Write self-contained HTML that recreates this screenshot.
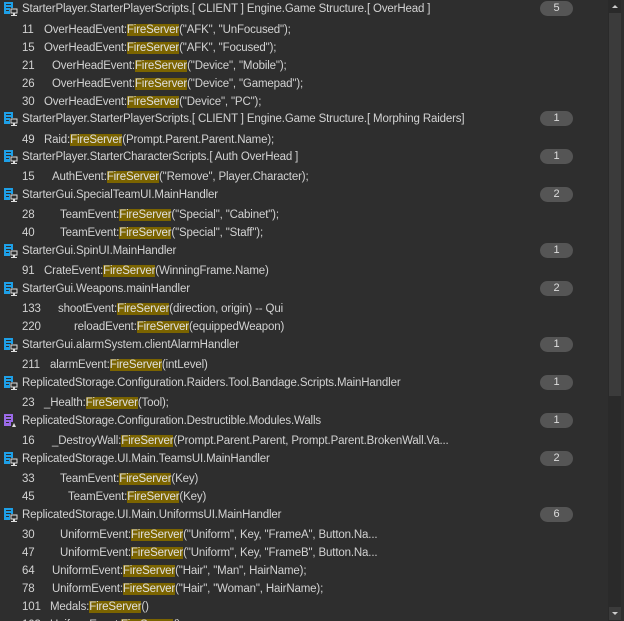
<!DOCTYPE html>
<html><head><meta charset="utf-8"><style>
html,body{margin:0;padding:0;background:#2e2e2e;width:624px;height:621px;overflow:hidden}
body{position:relative;font-family:"Liberation Sans",sans-serif;font-size:11.5px;color:#d2d2d2;letter-spacing:-0.15px}
#w{position:absolute;left:0;top:1px;width:624px;height:640px}
.r{position:absolute;left:0;height:18px;line-height:18px;white-space:nowrap}
.h{left:22px}
.n{position:absolute;left:22px}
.c{position:absolute}
.f{background:#7b6400;color:#e0e0e0}
.b{position:absolute;left:540px;width:33px;height:15px;border-radius:8px;background:#555;color:#ddd;text-align:center;line-height:15px;font-size:11px}
.i{position:absolute;left:3px;width:16px;height:14px}
.sb{position:absolute;left:608px;top:0;width:13px;height:621px;background:#2a2a2a}
.th{position:absolute;left:609px;top:13px;width:12px;height:383px;background:#3b3b3b}
</style></head><body>
<svg width="0" height="0" style="position:absolute"><defs>
<g id="bi"><rect x="1" y="0" width="9" height="12" fill="#1ea0e8"/><rect x="3" y="2" width="5" height="1" fill="#2e2e2e"/><rect x="3" y="5" width="5" height="1" fill="#2e2e2e"/><rect x="3" y="8" width="3" height="1" fill="#2e2e2e"/><rect x="7" y="6" width="8" height="6" fill="#2e2e2e"/><rect x="8" y="7" width="6" height="4" fill="none" stroke="#ddd" stroke-width="1"/><rect x="10" y="11" width="2" height="2" fill="#ddd"/><rect x="8" y="13" width="6" height="1" fill="#ddd"/></g>
<g id="pi"><rect x="1" y="0" width="9" height="12" fill="#9b6ae8"/><rect x="3" y="2" width="5" height="1" fill="#2e2e2e"/><rect x="3" y="5" width="5" height="1" fill="#2e2e2e"/><rect x="3" y="8" width="3" height="1" fill="#2e2e2e"/><rect x="8" y="8" width="6" height="5" fill="#2e2e2e"/><path d="M9 13 L11 9 L13 13 Z" fill="#ddd"/></g>
</defs></svg>
<div class="sb"></div><div class="th"></div>
<svg style="position:absolute;left:609px;top:2px" width="12" height="10"><path d="M3 6 L6 3 L9 6Z" fill="#ccc"/></svg>
<div style="position:absolute;left:609px;top:607px;width:12px;height:13px;background:#3b3b3b"></div>
<svg style="position:absolute;left:609px;top:609px" width="12" height="10"><path d="M3 3 L6 6 L9 3Z" fill="#ccc"/></svg>
<div id="w">
<svg class="i" style="top:1px"><use href="#bi"/></svg><div class="r h" style="top:-1px">StarterPlayer.StarterPlayerScripts.[ CLIENT ] Engine.Game Structure.[ OverHead ]</div><div class="b" style="top:0px">5</div>
<div class="r" style="top:20px;width:600px"><span class="n">11</span><span class="c" style="left:44px">OverHeadEvent:<span class="f">FireServer</span>("AFK", "UnFocused");</span></div>
<div class="r" style="top:38px;width:600px"><span class="n">15</span><span class="c" style="left:44px">OverHeadEvent:<span class="f">FireServer</span>("AFK", "Focused");</span></div>
<div class="r" style="top:56px;width:600px"><span class="n">21</span><span class="c" style="left:52px">OverHeadEvent:<span class="f">FireServer</span>("Device", "Mobile");</span></div>
<div class="r" style="top:74px;width:600px"><span class="n">26</span><span class="c" style="left:52px">OverHeadEvent:<span class="f">FireServer</span>("Device", "Gamepad");</span></div>
<div class="r" style="top:92px;width:600px"><span class="n">30</span><span class="c" style="left:44px">OverHeadEvent:<span class="f">FireServer</span>("Device", "PC");</span></div>

<svg class="i" style="top:111px"><use href="#bi"/></svg><div class="r h" style="top:109px">StarterPlayer.StarterPlayerScripts.[ CLIENT ] Engine.Game Structure.[ Morphing Raiders]</div><div class="b" style="top:110px">1</div>
<div class="r" style="top:130px;width:600px"><span class="n">49</span><span class="c" style="left:44px">Raid:<span class="f">FireServer</span>(Prompt.Parent.Parent.Name);</span></div>

<svg class="i" style="top:149px"><use href="#bi"/></svg><div class="r h" style="top:147px">StarterPlayer.StarterCharacterScripts.[ Auth OverHead ]</div><div class="b" style="top:148px">1</div>
<div class="r" style="top:167px;width:600px"><span class="n">15</span><span class="c" style="left:52px">AuthEvent:<span class="f">FireServer</span>("Remove", Player.Character);</span></div>

<svg class="i" style="top:187px"><use href="#bi"/></svg><div class="r h" style="top:185px">StarterGui.SpecialTeamUI.MainHandler</div><div class="b" style="top:186px">2</div>
<div class="r" style="top:205px;width:600px"><span class="n">28</span><span class="c" style="left:60px">TeamEvent:<span class="f">FireServer</span>("Special", "Cabinet");</span></div>
<div class="r" style="top:223px;width:600px"><span class="n">40</span><span class="c" style="left:60px">TeamEvent:<span class="f">FireServer</span>("Special", "Staff");</span></div>

<svg class="i" style="top:243px"><use href="#bi"/></svg><div class="r h" style="top:241px">StarterGui.SpinUI.MainHandler</div><div class="b" style="top:242px">1</div>
<div class="r" style="top:261px;width:600px"><span class="n">91</span><span class="c" style="left:44px">CrateEvent:<span class="f">FireServer</span>(WinningFrame.Name)</span></div>

<svg class="i" style="top:281px"><use href="#bi"/></svg><div class="r h" style="top:279px">StarterGui.Weapons.mainHandler</div><div class="b" style="top:280px">2</div>
<div class="r" style="top:299px;width:600px"><span class="n">133</span><span class="c" style="left:58px">shootEvent:<span class="f">FireServer</span>(direction, origin) -- Qui</span></div>
<div class="r" style="top:317px;width:600px"><span class="n">220</span><span class="c" style="left:74px">reloadEvent:<span class="f">FireServer</span>(equippedWeapon)</span></div>

<svg class="i" style="top:337px"><use href="#bi"/></svg><div class="r h" style="top:335px">StarterGui.alarmSystem.clientAlarmHandler</div><div class="b" style="top:336px">1</div>
<div class="r" style="top:355px;width:600px"><span class="n">211</span><span class="c" style="left:50px">alarmEvent:<span class="f">FireServer</span>(intLevel)</span></div>

<svg class="i" style="top:375px"><use href="#bi"/></svg><div class="r h" style="top:373px">ReplicatedStorage.Configuration.Raiders.Tool.Bandage.Scripts.MainHandler</div><div class="b" style="top:374px">1</div>
<div class="r" style="top:393px;width:600px"><span class="n">23</span><span class="c" style="left:44px">_Health:<span class="f">FireServer</span>(Tool);</span></div>

<svg class="i" style="top:413px"><use href="#pi"/></svg><div class="r h" style="top:411px">ReplicatedStorage.Configuration.Destructible.Modules.Walls</div><div class="b" style="top:412px">1</div>
<div class="r" style="top:431px;width:600px"><span class="n">16</span><span class="c" style="left:52px">_DestroyWall:<span class="f">FireServer</span>(Prompt.Parent.Parent, Prompt.Parent.BrokenWall.Va...</span></div>

<svg class="i" style="top:451px"><use href="#bi"/></svg><div class="r h" style="top:449px">ReplicatedStorage.UI.Main.TeamsUI.MainHandler</div><div class="b" style="top:450px">2</div>
<div class="r" style="top:469px;width:600px"><span class="n">33</span><span class="c" style="left:60px">TeamEvent:<span class="f">FireServer</span>(Key)</span></div>
<div class="r" style="top:487px;width:600px"><span class="n">45</span><span class="c" style="left:68px">TeamEvent:<span class="f">FireServer</span>(Key)</span></div>

<svg class="i" style="top:507px"><use href="#bi"/></svg><div class="r h" style="top:505px">ReplicatedStorage.UI.Main.UniformsUI.MainHandler</div><div class="b" style="top:506px">6</div>
<div class="r" style="top:525px;width:600px"><span class="n">30</span><span class="c" style="left:60px">UniformEvent:<span class="f">FireServer</span>("Uniform", Key, "FrameA", Button.Na...</span></div>
<div class="r" style="top:543px;width:600px"><span class="n">47</span><span class="c" style="left:60px">UniformEvent:<span class="f">FireServer</span>("Uniform", Key, "FrameB", Button.Na...</span></div>
<div class="r" style="top:561px;width:600px"><span class="n">64</span><span class="c" style="left:52px">UniformEvent:<span class="f">FireServer</span>("Hair", "Man", HairName);</span></div>
<div class="r" style="top:579px;width:600px"><span class="n">78</span><span class="c" style="left:52px">UniformEvent:<span class="f">FireServer</span>("Hair", "Woman", HairName);</span></div>
<div class="r" style="top:597px;width:600px"><span class="n">101</span><span class="c" style="left:50px">Medals:<span class="f">FireServer</span>()</span></div>
<div class="r" style="top:615px;width:600px"><span class="n">103</span><span class="c" style="left:50px">UniformEvent:<span class="f">FireServer</span>()</span></div>
</div>
</body></html>
